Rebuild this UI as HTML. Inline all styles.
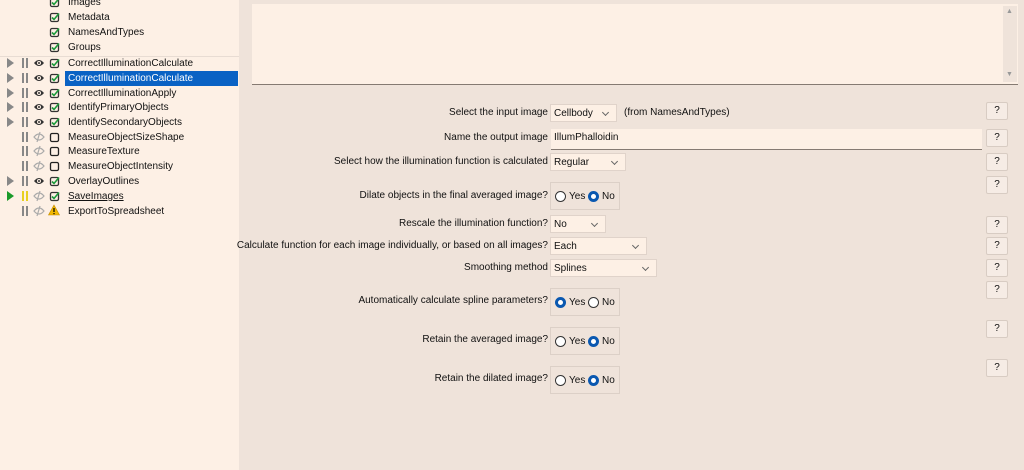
<!DOCTYPE html>
<html><head><meta charset="utf-8"><style>
*{margin:0;padding:0;box-sizing:border-box}
body{width:1024px;height:470px;overflow:hidden;background:#efe3da;font-family:"Liberation Sans",sans-serif;font-size:10px;color:#111;position:relative}
.left{position:absolute;left:0;top:0;width:239px;height:470px;background:#fdf0e5}
.a{position:absolute;white-space:nowrap}
.lt{margin-top:2px}
.sel{background:#0a62c4;color:#fff;left:65px!important;padding-left:3px;width:173px}
.lbl{position:absolute;right:476px;text-align:right;white-space:nowrap;line-height:12px}
.dd{position:absolute;left:550px;height:18px;background:#fdf0e5;border:1px solid #e0d3ca;padding:3px 0 0 3px;line-height:11px}
.dd:after{content:"";position:absolute;right:8px;top:5px;width:4px;height:4px;border-right:1px solid #666;border-bottom:1px solid #666;transform:rotate(45deg)}
.hb{position:absolute;left:986px;width:22px;height:18px;border:1px solid #d8ccc3;border-radius:2px;background:#f6ece5;text-align:center;line-height:16px;font-size:10px}
.rb{position:absolute;left:550px;width:70px;height:28px;border:1px solid #dcd0c7;background:#efe3da}
.r{position:absolute;top:8px;width:11px;height:11px;border-radius:50%;border:1px solid #333;background:#fff}
.r.on{border:3px solid #0a58b0;background:#fff}
.rt{position:absolute;top:8px;line-height:12px}
</style></head><body>
<div class="left">
<svg width="239" height="470" style="position:absolute;left:0;top:0">
<defs>
<g id="chk"><rect x="0.5" y="0.5" width="8" height="8" rx="1.5" fill="none" stroke="#333" stroke-width="1.3"/><path d="M2 4.5l2 2 5-6" fill="none" stroke="#1a9a3a" stroke-width="1.6"/></g>
<g id="box"><rect x="0.5" y="0.5" width="8" height="8" rx="1.5" fill="none" stroke="#222" stroke-width="1.3"/></g>
<g id="tri"><path d="M0 0l7 5-7 5z" fill="#888"/></g>
<g id="pz"><rect x="0" y="0" width="2" height="10" fill="#888"/><rect x="4" y="0" width="2" height="10" fill="#888"/></g>
<g id="eye"><path d="M0 5Q5 -1 10 5Q5 11 0 5z" fill="#333"/><circle cx="5" cy="5" r="2" fill="#fdf0e5"/><circle cx="5" cy="5" r="1" fill="#333"/></g>
<g id="eyx"><path d="M0 5Q5 -1 10 5Q5 11 0 5z" fill="none" stroke="#aaa" stroke-width="1.2"/><path d="M6 0L3 10" stroke="#aaa" stroke-width="1.2"/></g>
</defs>
<use href="#chk" x="50" y="-2"/><use href="#chk" x="50" y="13"/><use href="#chk" x="50" y="28"/><use href="#chk" x="50" y="43"/>
<line x1="0" y1="56.5" x2="239" y2="56.5" stroke="#e8dcd3"/>
<g>
<use href="#tri" x="7" y="58"/><use href="#pz" x="22" y="58"/><use href="#eye" x="34" y="58"/><use href="#chk" x="50" y="59"/>
<use href="#tri" x="7" y="73"/><use href="#pz" x="22" y="73"/><use href="#eye" x="34" y="73"/><use href="#chk" x="50" y="74"/>
<use href="#tri" x="7" y="88"/><use href="#pz" x="22" y="88"/><use href="#eye" x="34" y="88"/><use href="#chk" x="50" y="89"/>
<use href="#tri" x="7" y="102"/><use href="#pz" x="22" y="102"/><use href="#eye" x="34" y="102"/><use href="#chk" x="50" y="103"/>
<use href="#tri" x="7" y="117"/><use href="#pz" x="22" y="117"/><use href="#eye" x="34" y="117"/><use href="#chk" x="50" y="118"/>
<use href="#pz" x="22" y="132"/><use href="#eyx" x="34" y="132"/><use href="#box" x="50" y="133"/>
<use href="#pz" x="22" y="146"/><use href="#eyx" x="34" y="146"/><use href="#box" x="50" y="147"/>
<use href="#pz" x="22" y="161"/><use href="#eyx" x="34" y="161"/><use href="#box" x="50" y="162"/>
<use href="#tri" x="7" y="176"/><use href="#pz" x="22" y="176"/><use href="#eye" x="34" y="176"/><use href="#chk" x="50" y="177"/>
<path d="M7 191l7 5-7 5z" fill="#1a9a2a"/><rect x="22" y="191" width="2" height="10" fill="#e8d020"/><rect x="26" y="191" width="2" height="10" fill="#e8d020"/><use href="#eyx" x="34" y="191"/><use href="#chk" x="50" y="192"/>
<use href="#pz" x="22" y="206"/><use href="#eyx" x="34" y="206"/><path d="M54 205l5.5 10h-11z" fill="#f2b800" stroke="#c08a00" stroke-width=".6"/><rect x="53.4" y="208" width="1.2" height="4" fill="#000"/><rect x="53.4" y="213" width="1.2" height="1.2" fill="#000"/>
</g>
</svg>
<div class="a" style="left:68px;top:-3px">Images</div>
<div class="a" style="left:68px;top:12px">Metadata</div>
<div class="a" style="left:68px;top:27px">NamesAndTypes</div>
<div class="a" style="left:68px;top:42px">Groups</div>
<div class="a" style="left:68px;top:58px">CorrectIlluminationCalculate</div>
<div class="a sel" style="top:71px;height:15px;line-height:15px;padding-top:0">CorrectIlluminationCalculate</div>
<div class="a" style="left:68px;top:88px">CorrectIlluminationApply</div>
<div class="a" style="left:68px;top:102px">IdentifyPrimaryObjects</div>
<div class="a" style="left:68px;top:117px">IdentifySecondaryObjects</div>
<div class="a" style="left:68px;top:132px">MeasureObjectSizeShape</div>
<div class="a" style="left:68px;top:146px">MeasureTexture</div>
<div class="a" style="left:68px;top:161px">MeasureObjectIntensity</div>
<div class="a" style="left:68px;top:176px">OverlayOutlines</div>
<div class="a" style="left:68px;top:191px;text-decoration:underline">SaveImages</div>
<div class="a" style="left:68px;top:206px">ExportToSpreadsheet</div>
</div>

<div style="position:absolute;left:252px;top:4px;width:766px;height:81px;background:#fdf0e5;border-bottom:1px solid #857a72"></div>
<div style="position:absolute;left:1003px;top:6px;width:14px;height:76px;background:#efe3da"></div>
<div class="a" style="left:1006px;top:8px;font-size:7px;color:#999">▲</div>
<div class="a" style="left:1006px;top:71px;font-size:7px;color:#999">▼</div>

<div class="lbl" style="top:107px">Select the input image</div>
<div class="dd" style="top:104px;width:67px">Cellbody</div>
<div class="a" style="left:624px;top:107px">(from NamesAndTypes)</div>
<div class="lbl" style="top:132px">Name the output image</div>
<div style="position:absolute;left:551px;top:129px;width:431px;height:21px;background:#fdf0e5;border-bottom:1px solid #857a72;padding:3px 0 0 3px;line-height:11px">IllumPhalloidin</div>
<div class="lbl" style="top:156px">Select how the illumination function is calculated</div>
<div class="dd" style="top:153px;width:76px">Regular</div>
<div class="lbl" style="top:190px">Dilate objects in the final averaged image?</div>
<div class="rb" style="top:182px"><div class="r" style="left:4px"></div><div class="rt" style="left:18px">Yes</div><div class="r on" style="left:37px"></div><div class="rt" style="left:51px">No</div></div>
<div class="lbl" style="top:218px">Rescale the illumination function?</div>
<div class="dd" style="top:215px;width:56px">No</div>
<div class="lbl" style="top:240px">Calculate function for each image individually, or based on all images?</div>
<div class="dd" style="top:237px;width:97px">Each</div>
<div class="lbl" style="top:262px">Smoothing method</div>
<div class="dd" style="top:259px;width:107px">Splines</div>
<div class="lbl" style="top:295px">Automatically calculate spline parameters?</div>
<div class="rb" style="top:288px"><div class="r on" style="left:4px"></div><div class="rt" style="left:18px">Yes</div><div class="r" style="left:37px"></div><div class="rt" style="left:51px">No</div></div>
<div class="lbl" style="top:334px">Retain the averaged image?</div>
<div class="rb" style="top:327px"><div class="r" style="left:4px"></div><div class="rt" style="left:18px">Yes</div><div class="r on" style="left:37px"></div><div class="rt" style="left:51px">No</div></div>
<div class="lbl" style="top:373px">Retain the dilated image?</div>
<div class="rb" style="top:366px"><div class="r" style="left:4px"></div><div class="rt" style="left:18px">Yes</div><div class="r on" style="left:37px"></div><div class="rt" style="left:51px">No</div></div>

<div class="hb" style="top:102px">?</div>
<div class="hb" style="top:129px">?</div>
<div class="hb" style="top:153px">?</div>
<div class="hb" style="top:176px">?</div>
<div class="hb" style="top:216px">?</div>
<div class="hb" style="top:237px">?</div>
<div class="hb" style="top:259px">?</div>
<div class="hb" style="top:281px">?</div>
<div class="hb" style="top:320px">?</div>
<div class="hb" style="top:359px">?</div>
</body></html>
